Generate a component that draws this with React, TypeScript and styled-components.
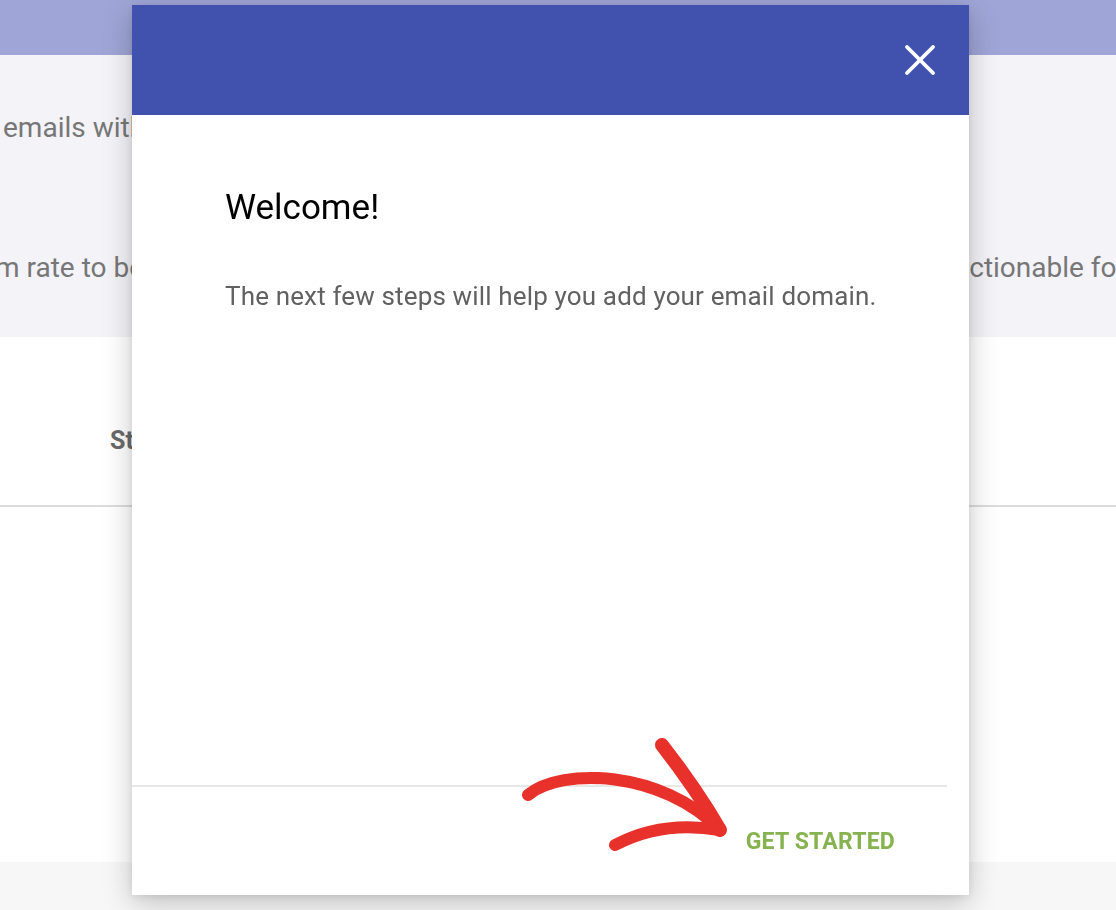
import styled, { createGlobalStyle } from "styled-components";

const GlobalStyle = createGlobalStyle`
  html, body {
    margin: 0;
    padding: 0;
    background: #ffffff;
    font-family: Roboto, "Liberation Sans", Arial, sans-serif;
    overflow: hidden;
  }
`;

const Page = styled.div`
  width: 1116px;
  height: 910px;
  display: flex;
  flex-direction: column;
  overflow: hidden;
`;

const TopBar = styled.div`
  height: 55px;
  flex: 0 0 auto;
  background: #9fa5d6;
`;

const InfoBand = styled.div`
  height: 282px;
  flex: 0 0 auto;
  background: #f3f3f8;
  display: flex;
  flex-direction: column;
  padding-top: 57px;
  gap: 108px;
  box-sizing: border-box;
  overflow: hidden;
`;

const InfoLine = styled.div`
  display: grid;
  grid-template-columns: 954px 1fr;
  font-size: 28px;
  line-height: 32px;
  color: #777777;
  white-space: nowrap;
`;

const InfoCell = styled.span<{ $indent?: number }>`
  overflow: hidden;
  text-indent: ${({ $indent }) => $indent ?? 0}px;
`;

const TableHead = styled.div`
  height: 170px;
  flex: 0 0 auto;
  border-bottom: 2px solid #dcdcdc;
  box-sizing: border-box;
  padding: 89px 0 0 110px;
`;

const HeadCell = styled.span`
  font-size: 25px;
  font-weight: 700;
  color: #6a6a6a;
`;

const TableBody = styled.div`
  flex: 1 1 auto;
  background: #ffffff;
`;

const PageFoot = styled.div`
  height: 48px;
  flex: 0 0 auto;
  background: #f7f7f7;
`;

const Modal = styled.div`
  position: fixed;
  left: 132px;
  top: 5px;
  width: 837px;
  height: 890px;
  background: #ffffff;
  box-shadow: 0 8px 28px rgba(0, 0, 0, 0.22), 0 2px 8px rgba(0, 0, 0, 0.08);
  display: flex;
  flex-direction: column;
`;

const ModalHeader = styled.div`
  height: 110px;
  flex: 0 0 auto;
  background: #4151ae;
  display: flex;
  align-items: center;
  justify-content: flex-end;
  padding-right: 34px;
`;

const CloseButton = styled.button`
  width: 30px;
  height: 30px;
  padding: 0;
  border: 0;
  background: none;
  cursor: pointer;
  display: flex;
  align-items: center;
  justify-content: center;
`;

const ModalBody = styled.div`
  flex: 1 1 auto;
  padding: 72px 0 0 93px;
`;

const Title = styled.h2`
  margin: 0;
  font-size: 35px;
  line-height: 41px;
  font-weight: 400;
  color: #000000;
`;

const Lead = styled.p`
  margin: 53px 0 0;
  font-size: 26px;
  line-height: 30px;
  letter-spacing: 0.15px;
  color: #616161;
`;

const ModalFooter = styled.div`
  position: relative;
  height: 110px;
  flex: 0 0 auto;
  display: flex;
  flex-direction: column;
`;

const Divider = styled.div`
  height: 2px;
  margin-right: 22px;
  background: #e8e8e8;
`;

const Actions = styled.div`
  flex: 1 1 auto;
  display: flex;
  align-items: center;
  justify-content: flex-end;
  padding-right: 74px;
`;

const ActionButton = styled.button`
  border: 0;
  background: none;
  padding: 0;
  font-family: Roboto, "Liberation Sans", Arial, sans-serif;
  font-size: 23px;
  font-weight: 700;
  letter-spacing: 0.2px;
  color: #86b34f;
  cursor: pointer;
`;

const Arrow = styled.svg`
  position: absolute;
  left: 380px;
  top: -50px;
  overflow: visible;
  pointer-events: none;
`;

export default function App() {
  return (
    <>
      <GlobalStyle />
      <Page>
        <TopBar />
        <InfoBand>
          <InfoLine>
            <InfoCell $indent={3}>emails with confidence and see how each one is doing over time</InfoCell>
            <span />
          </InfoLine>
          <InfoLine>
            <InfoCell $indent={-5}>m rate to better understand deliverability and get clear, simple</InfoCell>
            <span>actionable follow-ups</span>
          </InfoLine>
        </InfoBand>
        <TableHead>
          <HeadCell>Status</HeadCell>
        </TableHead>
        <TableBody />
        <PageFoot />
      </Page>

      <Modal role="dialog" aria-labelledby="welcome-title">
        <ModalHeader>
          <CloseButton aria-label="Close">
            <svg width="30" height="30" viewBox="0 0 30 30">
              <path d="M2 2 L28 28 M28 2 L2 28" stroke="#ffffff" strokeWidth="3.8" strokeLinecap="round" />
            </svg>
          </CloseButton>
        </ModalHeader>
        <ModalBody>
          <Title id="welcome-title">Welcome!</Title>
          <Lead>The next few steps will help you add your email domain.</Lead>
        </ModalBody>
        <ModalFooter>
          <Divider />
          <Actions>
            <ActionButton>GET STARTED</ActionButton>
          </Actions>
          <Arrow width="220" height="130" viewBox="0 0 220 130">
            <g fill="none" stroke="#e8312a" strokeLinecap="round" strokeLinejoin="round">
              <path d="M16 60 C 50 32, 150 35, 208 95" strokeWidth="12" />
              <path d="M150 10 Q 185 55, 208 95" strokeWidth="14" />
              <path d="M103 110 Q 150 85, 208 95" strokeWidth="12" />
            </g>
          </Arrow>
        </ModalFooter>
      </Modal>
    </>
  );
}
